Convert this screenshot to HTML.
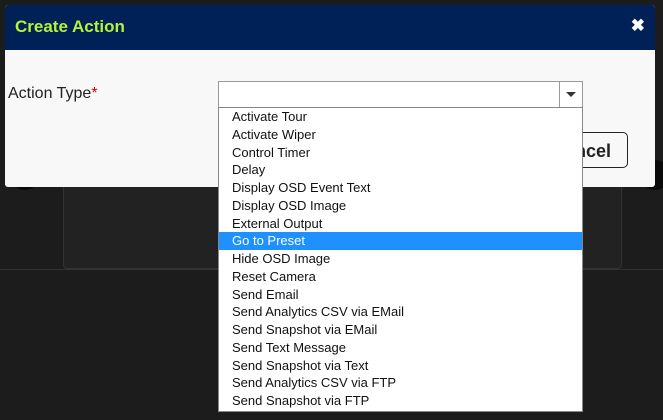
<!DOCTYPE html>
<html><head><style>
body{margin:0;width:663px;height:420px;background:#1c1c1c;position:relative;overflow:hidden;font-family:"Liberation Sans",sans-serif}
.bgpanel{position:absolute;left:63px;top:180px;width:557px;height:87px;background:#222;border:1px solid #333;border-radius:4px}
.line{position:absolute;left:0;top:269px;width:663px;height:1px;background:#333}
.circ{position:absolute;top:160px;width:30px;height:30px;border-radius:50%;background:#0a0a0a}
.modal{position:absolute;left:5px;top:5px;width:650px;height:182px;background:#f8f8f8;border-radius:3px;overflow:hidden}
.hdr{height:45px;background:#002157;position:relative}
.hdr .t{position:absolute;left:10px;top:12px;color:#b6f23a;font-weight:bold;font-size:17px}
.hdr .x{position:absolute;right:10px;top:11px;color:#fff;font-weight:bold;font-size:17px}
.lbl{position:absolute;left:8px;top:85px;font-size:16px;color:#222}
.lbl span{color:#c00}
.sel{position:absolute;left:218px;top:81px;width:363px;height:25px;background:#fff;border:1px solid #999}
.sel .arr{position:absolute;right:0;top:0;width:22px;height:25px;border-left:1px solid #999}
.sel .arr:after{content:"";position:absolute;left:6px;top:10px;border-left:5px solid transparent;border-right:5px solid transparent;border-top:5px solid #333}
.btn{position:absolute;left:540px;top:132px;width:88px;height:36px;border:1px solid #222;border-radius:5px;background:#f8f8f8;font-size:18px;font-weight:bold;color:#222;line-height:36px;text-align:right;box-sizing:border-box;padding-right:16px}
.list{position:absolute;left:218px;top:107px;width:363px;height:303px;background:#fff;border:1px solid #888;box-sizing:content-box}
.list div{height:17.75px;line-height:17.75px;font-size:13px;color:#111;padding-left:13px;white-space:nowrap}
.list .h{background:#1e90ff;color:#fff}
</style></head><body>
<div class="bgpanel"></div><div class="line"></div>
<div class="circ" style="left:10px"></div><div class="circ" style="left:640px"></div>
<div class="modal">
<div class="hdr"><div class="t">Create Action</div><div class="x">✖</div></div>
</div>
<div class="lbl">Action Type<span>*</span></div>
<div class="btn">Cancel</div>
<div class="sel"><div class="arr"></div></div>
<div class="list">
<div>Activate Tour</div><div>Activate Wiper</div><div>Control Timer</div><div>Delay</div><div>Display OSD Event Text</div><div>Display OSD Image</div><div>External Output</div><div class="h">Go to Preset</div><div>Hide OSD Image</div><div>Reset Camera</div><div>Send Email</div><div>Send Analytics CSV via EMail</div><div>Send Snapshot via EMail</div><div>Send Text Message</div><div>Send Snapshot via Text</div><div>Send Analytics CSV via FTP</div><div>Send Snapshot via FTP</div>
</div>
</body></html>
